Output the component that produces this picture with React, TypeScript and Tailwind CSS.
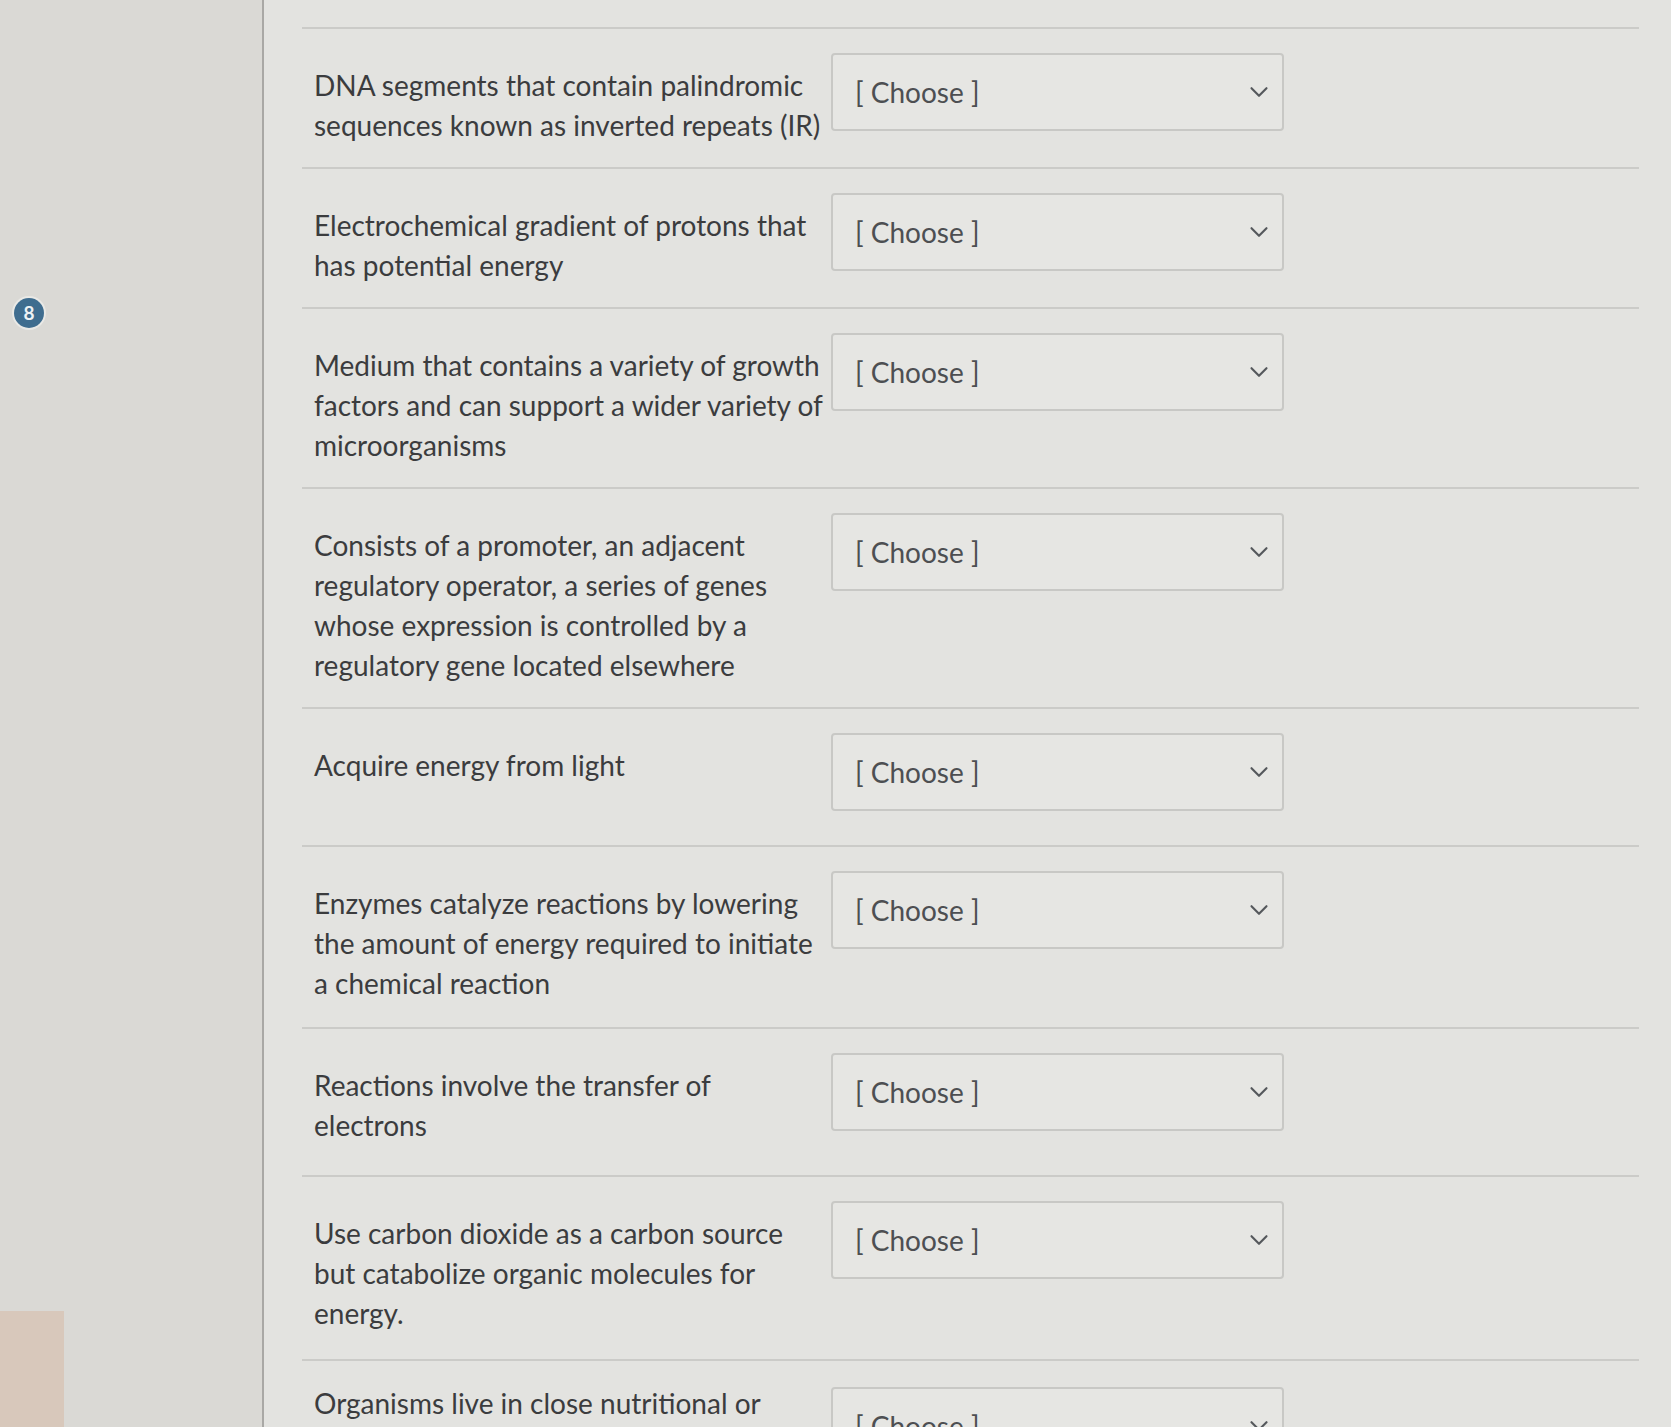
import { ChevronDown } from "lucide-react";

type Row = { lines: string[]; pad: string; sel: string };

const rows: Row[] = [
  {
    lines: ["DNA segments that contain palindromic", "sequences known as inverted repeats (IR)"],
    pad: "pt-[28px] pb-[22px]",
    sel: "mt-[-4px]",
  },
  {
    lines: ["Electrochemical gradient of protons that", "has potential energy"],
    pad: "pt-[28px] pb-[22px]",
    sel: "mt-[-4px]",
  },
  {
    lines: ["Medium that contains a variety of growth", "factors and can support a wider variety of", "microorganisms"],
    pad: "pt-[28px] pb-[22px]",
    sel: "mt-[-4px]",
  },
  {
    lines: [
      "Consists of a promoter, an adjacent",
      "regulatory operator, a series of genes",
      "whose expression is controlled by a",
      "regulatory gene located elsewhere",
    ],
    pad: "pt-[28px] pb-[22px]",
    sel: "mt-[-4px]",
  },
  { lines: ["Acquire energy from light"], pad: "pt-[28px] pb-[24px]", sel: "mt-[-4px]" },
  {
    lines: ["Enzymes catalyze reactions by lowering", "the amount of energy required to initiate", "a chemical reaction"],
    pad: "pt-[28px] pb-[24px]",
    sel: "mt-[-4px]",
  },
  {
    lines: ["Reactions involve the transfer of", "electrons"],
    pad: "pt-[28px] pb-[30px]",
    sel: "mt-[-4px]",
  },
  {
    lines: ["Use carbon dioxide as a carbon source", "but catabolize organic molecules for", "energy."],
    pad: "pt-[28px] pb-[26px]",
    sel: "mt-[-4px]",
  },
  {
    lines: ["Organisms live in close nutritional or"],
    pad: "pt-[14px] pb-[22px]",
    sel: "mt-[12px]",
  },
];

function ChooseSelect({ className }: { className: string }) {
  return (
    <div
      className={`mb-[10px] flex h-[78px] w-[453px] shrink-0 items-center justify-between rounded-[4px] border-2 border-[#c8c8c5] bg-[#e6e6e3] pl-[22px] pr-[8px] ${className}`}
    >
      <span className="text-[28px] text-[#4d4f52]">[ Choose ]</span>
      <ChevronDown size={30} strokeWidth={1.7} className="text-[#55585c]" />
    </div>
  );
}

export default function App() {
  return (
    <div
      className="flex h-[1427px] w-full overflow-hidden bg-[#e3e3e0] text-[#3b3c3e]"
      style={{ fontFamily: "Lato, 'Open Sans', sans-serif" }}
    >
      <aside className="relative w-[264px] shrink-0 border-r-2 border-[#a9a8a5] bg-[#dad9d5] pl-[14px] pt-[298px]">
        <div className="flex h-[30px] w-[30px] items-center justify-center rounded-full bg-[#3f6d8f] text-[19px] font-bold text-[#eef2f5] ring-2 ring-[#e9e9e6]">
          8
        </div>
        <div className="absolute bottom-0 left-0 h-[116px] w-[64px] bg-[#d8c8bb]" />
      </aside>

      <main className="flex-1 pl-[38px] pt-[27px]">
        <div className="w-[1337px]">
          {rows.map((row, i) => (
            <div key={i} className={`flex items-start border-t-2 border-[#cbcbc8] pl-[12px] ${row.pad}`}>
              <div className="w-[517px] shrink-0 pt-[8px] text-[28px] leading-[40px]">
                {row.lines.map((l) => (
                  <div key={l} className="whitespace-nowrap">
                    {l}
                  </div>
                ))}
              </div>
              <ChooseSelect className={row.sel} />
            </div>
          ))}
        </div>
      </main>
    </div>
  );
}
